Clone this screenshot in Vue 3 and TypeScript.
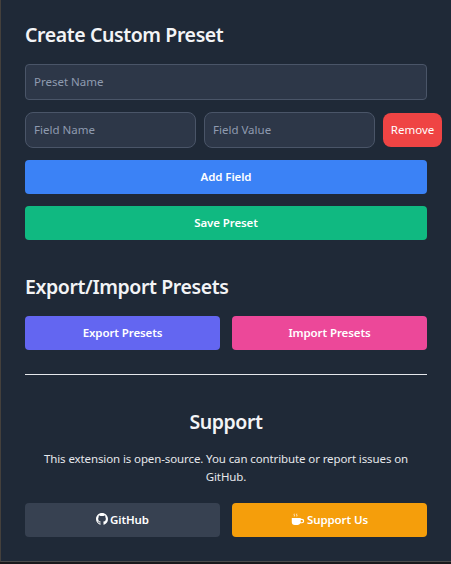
<script setup lang="ts">
const fields = [
  { label: 'Export Presets', tone: 'indigo' },
  { label: 'Import Presets', tone: 'pink' },
]
</script>

<template>
  <main class="panel">
    <section class="create">
      <h2 class="heading">Create Custom Preset</h2>
      <input class="input name" type="text" placeholder="Preset Name" />
      <div class="field-row">
        <input class="input field" type="text" placeholder="Field Name" />
        <input class="input field" type="text" placeholder="Field Value" />
        <button class="remove" type="button">Remove</button>
      </div>
      <button class="btn blue" type="button">Add Field</button>
      <button class="btn green" type="button">Save Preset</button>
    </section>

    <section class="transfer">
      <h2 class="heading">Export/Import Presets</h2>
      <div class="pair">
        <button v-for="f in fields" :key="f.label" class="btn" :class="f.tone" type="button">{{ f.label }}</button>
      </div>
    </section>

    <hr class="rule" />

    <section class="support">
      <h2 class="heading centered">Support</h2>
      <p class="note">This extension is open-source. You can contribute or report issues on GitHub.</p>
      <div class="pair">
        <button class="btn slate" type="button">
          <svg class="icon" viewBox="0 0 16 16" aria-hidden="true"><path fill="currentColor" d="M8 0C3.58 0 0 3.58 0 8c0 3.54 2.29 6.53 5.47 7.59.4.07.55-.17.55-.38 0-.19-.01-.82-.01-1.49-2.01.37-2.53-.49-2.69-.94-.09-.23-.48-.94-.82-1.13-.28-.15-.68-.52-.01-.53.63-.01 1.08.58 1.23.82.72 1.21 1.87.87 2.33.66.07-.52.28-.87.51-1.07-1.78-.2-3.64-.89-3.64-3.95 0-.87.31-1.59.82-2.15-.08-.2-.36-1.02.08-2.12 0 0 .67-.21 2.2.82.64-.18 1.32-.27 2-.27s1.36.09 2 .27c1.53-1.04 2.2-.82 2.2-.82.44 1.1.16 1.92.08 2.12.51.56.82 1.27.82 2.15 0 3.07-1.87 3.75-3.65 3.95.29.25.54.73.54 1.48 0 1.07-.01 1.93-.01 2.2 0 .21.15.46.55.38A8.01 8.01 0 0 0 16 8c0-4.42-3.58-8-8-8z"/></svg>
          GitHub
        </button>
        <button class="btn amber" type="button">
          <svg class="icon cup" viewBox="0 0 18 16" aria-hidden="true">
            <path fill="currentColor" d="M1 6h11.5v1h1.6a2.9 2.9 0 0 1 0 5.8h-2.1A4.6 4.6 0 0 1 8.6 15H4.9A3.9 3.9 0 0 1 1 11.1zm11.5 2.6v3h1.4a1.5 1.5 0 0 0 0-3z"/>
            <path fill="none" stroke="currentColor" stroke-width="1.1" d="M4.2 0.6c-.7 1 .7 1.7 0 3.4M7.4 0.6c-.7 1 .7 1.7 0 3.4"/>
          </svg>
          Support Us
        </button>
      </div>
    </section>
  </main>
</template>

<style>
html, body { margin: 0; background: #18181b; }
</style>

<style scoped>
.panel {
  box-sizing: border-box;
  width: 451px;
  height: 562px;
  padding: 24px 24px 0;
  background: #1f2937;
  border-left: 1px solid #44403c;
  border-bottom: 1px solid #4b4b4b;
  color: #f3f4f6;
  font-family: "Noto Sans", sans-serif;
  overflow: hidden;
}
.heading {
  margin: 0 0 18px;
  font-size: 19.5px;
  letter-spacing: -0.4px;
  line-height: 22px;
  font-weight: 600;
  color: #f3f4f6;
}
.support .heading { margin-bottom: 16px; line-height: 24px; }
.centered { text-align: center; }
.input {
  box-sizing: border-box;
  display: block;
  height: 36px;
  padding: 0 8px 2px;
  background: #2d3748;
  border: 1px solid #4a5568;
  color: #f3f4f6;
  font: 11.5px "Noto Sans", sans-serif;
  outline: none;
}
.input::placeholder { color: #8f9bb0; opacity: 1; }
.name { width: 402px; border-radius: 4px; margin-bottom: 12px; }
.field-row {
  display: flex;
  align-items: center;
  gap: 8px;
  width: 417px;
  margin-bottom: 12px;
}
.field { width: 171px; border-radius: 8px; }
.remove {
  width: 59px;
  height: 34px;
  padding: 0 0 2px;
  border: 0;
  border-radius: 8px;
  background: #ef4444;
  color: #fff;
  font: 11.5px "Noto Sans", sans-serif;
}
.btn {
  box-sizing: border-box;
  display: flex;
  align-items: center;
  justify-content: center;
  gap: 2px;
  width: 402px;
  height: 34px;
  margin-bottom: 12px;
  padding: 0 0 2px;
  border: 0;
  border-radius: 4px;
  color: #fff;
  font: 600 11.5px "Noto Sans", sans-serif;
  letter-spacing: -0.1px;
}
.blue { background: #3b82f6; }
.green { background: #10b981; }
.indigo { background: #6366f1; }
.pink { background: #ec4899; }
.slate { background: #374151; }
.amber { background: #f59e0b; }
.transfer { margin-top: 36px; }
.pair { display: flex; gap: 12px; width: 402px; }
.pair .btn { flex: 1; width: auto; margin-bottom: 0; }
.rule {
  width: 402px;
  margin: 24px 0 35px;
  border: 0;
  border-top: 1px solid #e5e7eb;
}
.note {
  margin: 0 0 17px;
  font-size: 11.5px;
  letter-spacing: -0.11px;
  line-height: 18px;
  text-align: center;
  color: #e5e7eb;
}
.icon { width: 12px; height: 12px; flex: none; }
.cup { width: 14px; height: 13px; }
</style>
